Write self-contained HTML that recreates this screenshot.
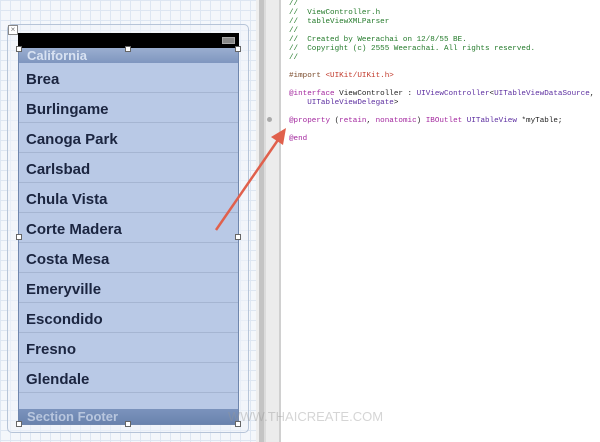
<!DOCTYPE html><html><head><style>
body{margin:0;width:600px;height:442px;overflow:hidden;position:relative;background:#fff;font-family:"Liberation Sans",sans-serif}
.grid{position:absolute;left:0;top:0;width:256px;height:442px;background-color:#f4f7fb;background-image:linear-gradient(#dde6f2 1px,transparent 1px),linear-gradient(90deg,#dde6f2 1px,transparent 1px);background-size:10px 10px}
.frame{position:absolute;left:7px;top:24px;width:240px;height:407px;border:1px solid #b6c4d8;border-radius:5px;background:rgba(240,244,250,.6)}
.x{position:absolute;left:8px;top:25px;width:8px;height:8px;border:1px solid #888;background:#fff;font-size:8px;line-height:8px;text-align:center;color:#777}
.status{position:absolute;left:18px;top:33px;width:221px;height:15px;background:#000}
.bat{position:absolute;left:222px;top:37px;width:11px;height:5px;border:1px solid #aaa;background:#888}
.table{position:absolute;left:18px;top:48px;width:219px;height:376px;background:#b9c9e6;border:1px solid #6f86ad;border-top:none;box-sizing:content-box}
.hdr{height:15px;background:linear-gradient(#9aaed0,#7f96bf);color:#d8e2f2;font-weight:bold;font-size:13px;line-height:15px;padding-left:8px}
.row{height:29px;border-bottom:1px solid #a5b5d2;font-weight:bold;font-size:15px;line-height:33px;padding-left:7px;color:#1b2540;overflow:hidden}
.ftr{position:absolute;left:0;bottom:0;width:219px;height:15px;background:linear-gradient(#7b93bd,#6a83ae);color:#b8c6de;font-weight:bold;font-size:13px;line-height:15px;padding-left:8px;box-sizing:border-box}
.h{position:absolute;width:4px;height:4px;background:#fff;border:1px solid #666}
.code{position:absolute;left:289px;top:0;font-family:"Liberation Mono",monospace;font-size:7.6px;line-height:9px;white-space:pre;color:#222}
.c{color:#237a2a}.p{color:#7a4a2a}.r{color:#c1382a}.k{color:#a3279e}.t{color:#5c2ea0}
</style></head><body>
<div class="grid"></div>
<div style="position:absolute;left:256px;top:0;width:3px;height:442px;background:#eee"></div>
<div style="position:absolute;left:259px;top:0;width:5px;height:442px;background:#c4c4c4"></div>
<div style="position:absolute;left:264px;top:0;width:2px;height:442px;background:#dcdcdc"></div>
<div style="position:absolute;left:266px;top:0;width:13px;height:442px;background:#ececec"></div>
<div style="position:absolute;left:279px;top:0;width:2px;height:442px;background:#d0d0d0"></div>
<div style="position:absolute;left:267px;top:117px;width:5px;height:5px;border-radius:50%;background:#aaa"></div>
<div class="frame"></div><div class="x">×</div>
<div class="status"></div><div class="bat"></div>
<div class="table"><div class="hdr">California</div>
<div class="row">Brea</div><div class="row">Burlingame</div><div class="row">Canoga Park</div><div class="row">Carlsbad</div><div class="row">Chula Vista</div><div class="row">Corte Madera</div><div class="row">Costa Mesa</div><div class="row">Emeryville</div><div class="row">Escondido</div><div class="row">Fresno</div><div class="row">Glendale</div>
<div class="ftr">Section Footer</div></div>
<div class="h" style="left:16px;top:46px"></div><div class="h" style="left:125px;top:46px"></div><div class="h" style="left:235px;top:46px"></div>
<div class="h" style="left:16px;top:234px"></div><div class="h" style="left:235px;top:234px"></div>
<div class="h" style="left:16px;top:421px"></div><div class="h" style="left:125px;top:421px"></div><div class="h" style="left:235px;top:421px"></div>
<div style="position:absolute;left:228px;top:409px;font-size:13px;color:rgba(150,150,150,.4)">WWW.THAICREATE.COM</div>
<div class="code"><span class="c">//
//  ViewController.h
//  tableViewXMLParser
//
//  Created by Weerachai on 12/8/55 BE.
//  Copyright (c) 2555 Weerachai. All rights reserved.
//</span>

<span class="p">#import </span><span class="r">&lt;UIKit/UIKit.h&gt;</span>

<span class="k">@interface</span> ViewController : <span class="t">UIViewController</span>&lt;<span class="t">UITableViewDataSource</span>,
    <span class="t">UITableViewDelegate</span>&gt;

<span class="k">@property</span> (<span class="k">retain</span>, <span class="k">nonatomic</span>) <span class="k">IBOutlet</span> <span class="t">UITableView</span> *myTable;

<span class="k">@end</span></div>
<svg style="position:absolute;left:0;top:0" width="600" height="442"><line x1="216" y1="230" x2="280" y2="137" stroke="#e0604c" stroke-width="2.5"/><polygon points="286,128 271,137 283,145" fill="#e0604c"/></svg>
</body></html>
